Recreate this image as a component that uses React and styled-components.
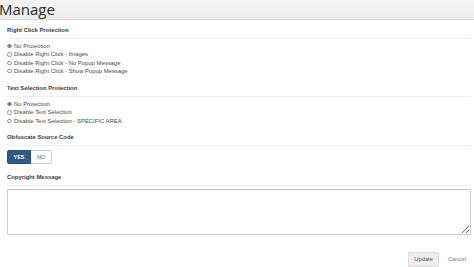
import React from "react";
import styled, { createGlobalStyle } from "styled-components";

const Global = createGlobalStyle`
  html, body { margin: 0; padding: 0; background: #fff; overflow: hidden; }
  body { font-family: "Liberation Sans", Arial, sans-serif; color: #333; }
`;

const Header = styled.div`
  height: 19px;
  background: linear-gradient(#f5f5f5, #ebebeb);
  border-bottom: 1px solid #dcdcdc;
  box-shadow: 0 1px 1px rgba(0,0,0,0.04);
  display: flex;
  align-items: flex-end;
  overflow: hidden;
`;

const Title = styled.h1`
  margin: 0 0 1px -1px;
  font-family: "Open Sans", sans-serif;
  font-weight: 400;
  font-size: 15px;
  line-height: 17px;
  color: #2b2b2b;
`;

const Body = styled.div`
  padding: 6px 3px 0 7px;
`;

const Section = styled.section`
  margin-bottom: ${p => p.$mb}px;
`;

const Legend = styled.div`
  font-size: 5.9px;
  font-weight: 600;
  line-height: 8px;
  color: #3a3a3a;
  padding-bottom: 4px;
  border-bottom: 1px solid #eee;
  margin-bottom: ${p => p.$gap}px;
`;

const RadioList = styled.div`
  display: flex;
  flex-direction: column;
`;

const RadioRow = styled.label`
  display: flex;
  align-items: center;
  height: 8.33px;
  font-size: 5.9px;
  color: #4a4a4a;
`;

const Dot = styled.span`
  box-sizing: border-box;
  width: 4.5px;
  height: 4.5px;
  border-radius: 50%;
  border: 0.6px solid #999;
  margin-right: 2.5px;
  background: ${p => (p.$on ? "radial-gradient(circle, #555 0 1px, #fff 1.3px)" : "#fff")};
`;

const Toggle = styled.div`
  display: flex;
  width: fit-content;
  height: 14px;
`;

const ToggleBtn = styled.span`
  display: flex;
  align-items: center;
  justify-content: center;
  width: ${p => p.$w}px;
  font-size: 5.5px;
  font-weight: ${p => (p.$on ? 700 : 400)};
  color: ${p => (p.$on ? "#fff" : "#666")};
  background: ${p => (p.$on ? "#2c5c8c" : "#fff")};
  border: 1px solid ${p => (p.$on ? "#264f78" : "#ccc")};
  border-radius: ${p => (p.$on ? "2px 0 0 2px" : "0 2px 2px 0")};
  ${p => (!p.$on ? "border-left: none;" : "")}
`;

const TextArea = styled.textarea`
  display: block;
  width: 100%;
  box-sizing: border-box;
  height: 46px;
  border: 1px solid #ccc;
  border-radius: 1px;
  box-shadow: inset 0 1px 1px rgba(0,0,0,0.06);
  resize: vertical;
  margin: 0;
`;

const Actions = styled.div`
  display: flex;
  justify-content: flex-end;
  align-items: center;
  gap: 5px;
  padding: 17px 1px 0 0;
`;

const Button = styled.button`
  height: 15px;
  padding: 0 ${p => (p.$primary ? 5 : 3)}px;
  font-family: inherit;
  font-size: 5.8px;
  color: ${p => (p.$primary ? "#555" : "#777")};
  background: ${p => (p.$primary ? "#eee" : "transparent")};
  border: 1px solid ${p => (p.$primary ? "#ddd" : "transparent")};
  border-radius: 1px;
`;

const rc = ["No Protection", "Disable Right Click - Images", "Disable Right Click - No Popup Message", "Disable Right Click - Show Popup Message"];
const ts = ["No Protection", "Disable Text Selection", "Disable Text Selection - SPECIFIC AREA"];

export default function App() {
  return (
    <>
      <Global />
      <Header><Title>Manage</Title></Header>
      <Body>
        <Section $mb={8.7}>
          <Legend $gap={3}>Right Click Protection</Legend>
          <RadioList>
            {rc.map((t, i) => (
              <RadioRow key={t}><Dot $on={i === 0} />{t}</RadioRow>
            ))}
          </RadioList>
        </Section>
        <Section $mb={8}>
          <Legend $gap={3}>Text Selection Protection</Legend>
          <RadioList>
            {ts.map((t, i) => (
              <RadioRow key={t}><Dot $on={i === 0} />{t}</RadioRow>
            ))}
          </RadioList>
        </Section>
        <Section $mb={9}>
          <Legend $gap={4}>Obfuscate Source Code</Legend>
          <Toggle>
            <ToggleBtn $on $w={22}>YES</ToggleBtn>
            <ToggleBtn $w={20}>NO</ToggleBtn>
          </Toggle>
        </Section>
        <Section $mb={0}>
          <Legend $gap={3}>Copyright Message</Legend>
          <TextArea />
        </Section>
        <Actions>
          <Button $primary>Update</Button>
          <Button>Cancel</Button>
        </Actions>
      </Body>
    </>
  );
}
